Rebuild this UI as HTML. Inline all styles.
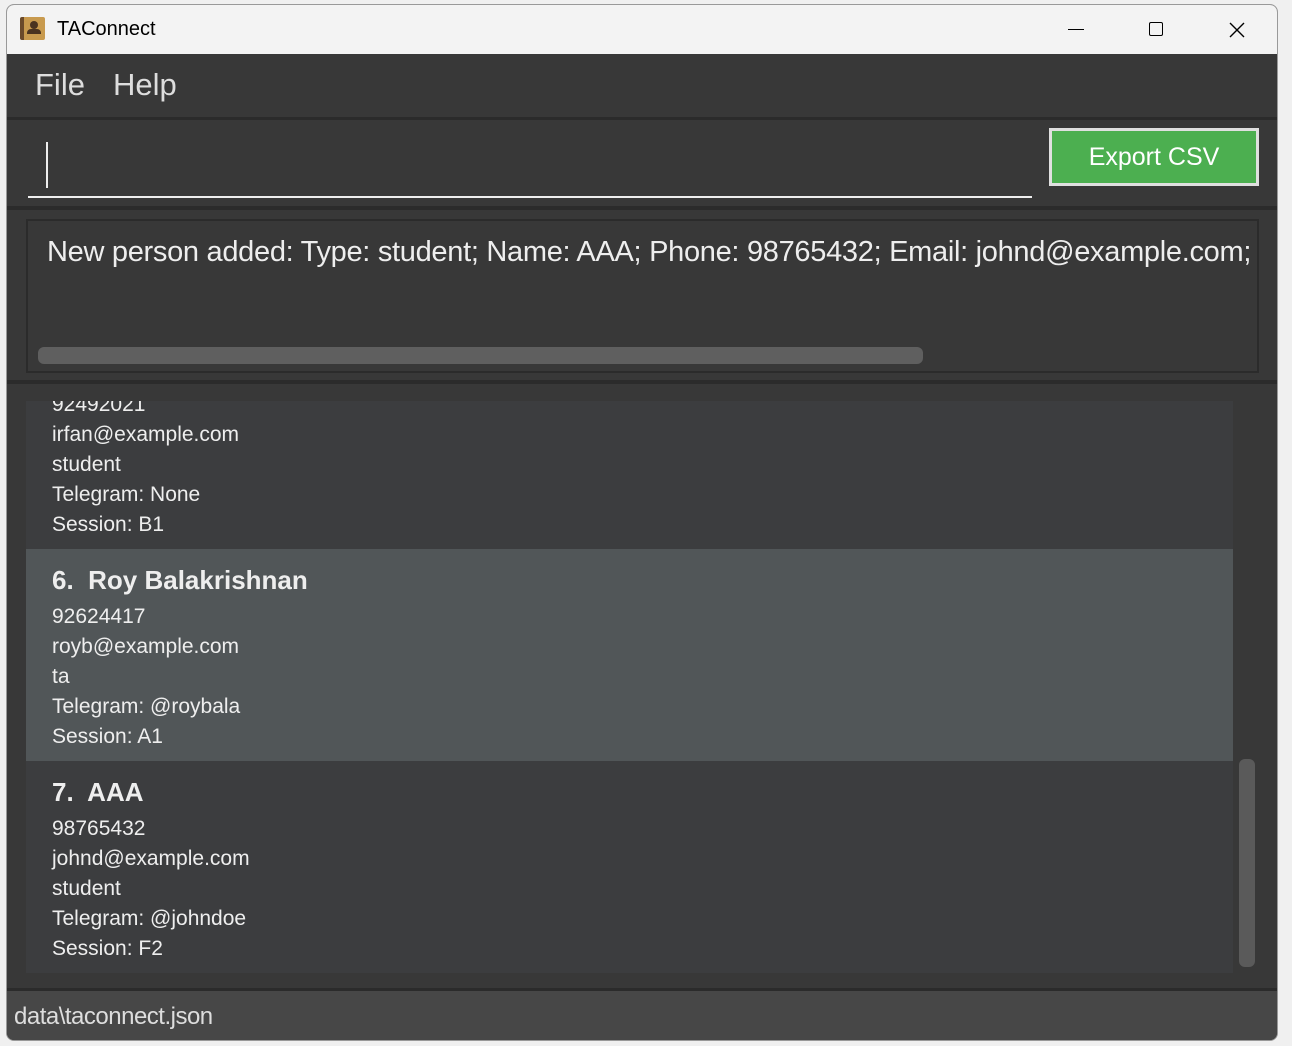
<!DOCTYPE html>
<html><head><style>
*{margin:0;padding:0;box-sizing:border-box}
body{width:1292px;height:1046px;background:#f0f0f0;position:relative;overflow:hidden;font-family:"Liberation Sans",sans-serif}
.win{position:absolute;left:6px;top:4px;width:1272px;height:1037px;background:#383838;border-radius:8px;overflow:hidden;border:1px solid #999}
.title{position:absolute;left:0;top:0;width:100%;height:49px;background:#f3f3f3;color:#000;font-size:20px}
.abs{position:absolute}
.t{color:#fff;white-space:nowrap}
.card{position:absolute;left:19px;width:1207px;background:#3c3d3f;overflow:hidden}
.card .t{position:absolute;left:26px;font-size:21px;color:#eee}
</style></head><body>
<div class="win">
 <div class="title">
  <div class="abs" style="left:13px;top:12px;width:25px;height:23px;background:#c89a4e;border-left:4px solid #6b4a2a;border-radius:2px"><div class="abs" style="left:6px;top:4px;width:8px;height:8px;border-radius:50%;background:#4a3320"></div><div class="abs" style="left:3px;top:12px;width:14px;height:5px;background:#4a3320;border-radius:4px 4px 0 0"></div></div>
  <div class="abs" style="left:50px;top:13px">TAConnect</div>
  <div class="abs" style="left:1061px;top:24px;width:16px;height:1px;background:#000"></div>
  <div class="abs" style="left:1142px;top:17px;width:14px;height:14px;border:1.5px solid #000;border-radius:2px"></div>
  <svg class="abs" style="left:1222px;top:17px" width="16" height="16"><path d="M1 1L15 15M15 1L1 15" stroke="#000" stroke-width="1.4"/></svg>
 </div>
 <div class="abs t" style="left:28px;top:62px;font-size:31px;color:#ddd">File</div>
 <div class="abs t" style="left:106px;top:62px;font-size:31px;color:#ddd">Help</div>
 <div class="abs" style="left:0;top:112px;width:100%;height:3px;background:#2b2b2b"></div>
 <div class="abs" style="left:39px;top:137px;width:2px;height:46px;background:#eee"></div>
 <div class="abs" style="left:21px;top:191px;width:1004px;height:2px;background:#eee"></div>
 <div class="abs" style="left:1042px;top:123px;width:210px;height:58px;background:#e0e0e0"></div>
 <div class="abs t" style="left:1045px;top:126px;width:204px;height:52px;background:#4caf50;font-size:25px;text-align:center;line-height:52px">Export CSV</div>
 <div class="abs" style="left:0;top:201px;width:100%;height:4px;background:#2b2b2b"></div>
 <div class="abs" style="left:19px;top:214px;width:1233px;height:154px;border:2px solid #2b2b2b"></div>
 <div class="abs t" style="left:40px;top:231px;font-size:29px;color:#eee;letter-spacing:-0.3px">New person added: Type: student; Name: AAA; Phone: 98765432; Email: johnd@example.com;</div>
 <div class="abs" style="left:31px;top:342px;width:885px;height:17px;border-radius:6px;background:#5f5f5f"></div>
 <div class="abs" style="left:0;top:375px;width:100%;height:4px;background:#2b2b2b"></div>
 <div class="card" style="top:396px;height:148px">
  <div class="t" style="top:-8px">92492021</div>
  <div class="t" style="top:22px">irfan@example.com</div>
  <div class="t" style="top:52px">student</div>
  <div class="t" style="top:82px">Telegram: None</div>
  <div class="t" style="top:112px">Session: B1</div>
 </div>
 <div class="card" style="top:544px;height:212px;background:#515658">
  <div class="t" style="top:16px;font-size:26px;font-weight:bold">6.&nbsp; Roy Balakrishnan</div>
  <div class="t" style="top:56px">92624417</div>
  <div class="t" style="top:86px">royb@example.com</div>
  <div class="t" style="top:116px">ta</div>
  <div class="t" style="top:146px">Telegram: @roybala</div>
  <div class="t" style="top:176px">Session: A1</div>
 </div>
 <div class="card" style="top:756px;height:212px">
  <div class="t" style="top:16px;font-size:26px;font-weight:bold">7.&nbsp; AAA</div>
  <div class="t" style="top:56px">98765432</div>
  <div class="t" style="top:86px">johnd@example.com</div>
  <div class="t" style="top:116px">student</div>
  <div class="t" style="top:146px">Telegram: @johndoe</div>
  <div class="t" style="top:176px">Session: F2</div>
 </div>
 <div class="abs" style="left:1232px;top:754px;width:16px;height:208px;border-radius:6px;background:#5a5a5a"></div>
 <div class="abs" style="left:0;top:983px;width:100%;height:3px;background:#2b2b2b"></div>
 <div class="abs" style="left:0;top:986px;width:100%;height:51px;background:#474747"></div>
 <div class="abs t" style="left:7px;top:998px;font-size:24px;color:#ddd;letter-spacing:-0.5px">data\taconnect.json</div>
</div>
</body></html>
